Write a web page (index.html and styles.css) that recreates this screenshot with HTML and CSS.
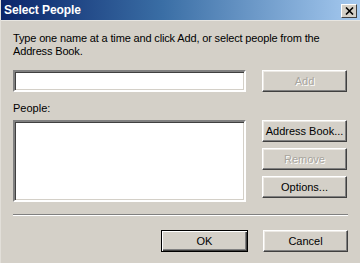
FILE: index.html
```html
<!DOCTYPE html>
<html>
<head>
<meta charset="utf-8">
<link rel="stylesheet" href="styles.css">
</head>
<body>
<div class="window">
  <div class="titlebar">
    <span class="title">Select People</span>
    <span class="close">
      <svg width="9" height="8" viewBox="0 0 9 8"><path d="M1 0.5 L8 7.5 M8 0.5 L1 7.5" stroke="#000" stroke-width="1.6"/></svg>
    </span>
  </div>
  <div class="content">
    <p class="intro">Type one name at a time and click Add, or select people from the Address Book.</p>
    <div class="row-add">
      <div class="field"></div>
      <button class="btn disabled">Add</button>
    </div>
    <div class="label">People:</div>
    <div class="row-people">
      <div class="listbox"></div>
      <div class="side">
        <button class="btn">Address Book...</button>
        <button class="btn disabled">Remove</button>
        <button class="btn">Options...</button>
      </div>
    </div>
    <div class="separator"></div>
    <div class="footer">
      <button class="btn default">OK</button>
      <button class="btn">Cancel</button>
    </div>
  </div>
</div>
</body>
</html>
```
FILE: styles.css
```css
html, body {
  margin: 0;
  padding: 0;
  width: 360px;
  height: 263px;
  overflow: hidden;
  background: #d4d0c8;
}
.window {
  width: 360px;
  height: 263px;
  background: #d4d0c8;
  font-family: "Liberation Sans", Arial, sans-serif;
  font-size: 11px;
  color: #000;
  box-sizing: border-box;
  border-left: 1px solid #e2dfd9;
}
.titlebar {
  height: 20px;
  background: linear-gradient(to right, #0a246a 0%, #3a6ea5 45%, #a6caf0 100%);
  display: flex;
  align-items: center;
  justify-content: space-between;
  padding: 0 3px 0 3px;
  border-bottom: 1px solid #e8e6e1;
}
.title {
  color: #fff;
  font-weight: bold;
  font-size: 12px;
  letter-spacing: -0.1px;
}
.close {
  width: 14px;
  height: 12px;
  background: #d4d0c8;
  border: 1px solid;
  border-color: #fff #404040 #404040 #fff;
  display: flex;
  align-items: center;
  justify-content: center;
  margin-top: 1px;
}
.content {
  padding: 0 12px 0 12px;
}
.intro {
  margin: 11px 0 0 0;
  line-height: 13px;
  width: 320px;
  letter-spacing: -0.15px;
}
.row-add {
  display: grid;
  grid-template-columns: 233px 85px;
  column-gap: 16px;
  margin-top: 12px;
  height: 22px;
}
.field, .listbox {
  background: #fff;
  box-sizing: border-box;
  border: 2px solid;
  border-color: #808080 #ffffff #ffffff #808080;
  box-shadow: inset 1px 1px 0 #404040, inset -1px -1px 0 #d4d0c8;
}
.field {
  height: 22px;
}
.label {
  margin-top: 10px;
  height: 13px;
  line-height: 13px;
}
.row-people {
  display: grid;
  grid-template-columns: 233px 85px;
  column-gap: 16px;
  margin-top: 5px;
}
.listbox {
  height: 82px;
}
.side {
  display: flex;
  flex-direction: column;
  gap: 6px;
}
.btn {
  font-family: "Liberation Sans", Arial, sans-serif;
  font-size: 11px;
  height: 22px;
  width: 85px;
  padding: 0;
  margin: 0;
  background: #d4d0c8;
  color: #000;
  box-sizing: border-box;
  border: 1px solid;
  border-color: #ffffff #404040 #404040 #ffffff;
  box-shadow: inset -1px -1px 0 #808080, inset 1px 1px 0 #ece9e4;
}
.btn.disabled {
  color: #a8a59e;
  text-shadow: 1px 1px 0 #fff;
}
.btn.default {
  border: 1px solid #000;
  box-shadow: inset 1px 1px 0 #fff, inset -1px -1px 0 #404040, inset -2px -2px 0 #808080;
  width: 87px;
}
.separator {
  margin-top: 12px;
  height: 1px;
  background: #808080;
  border-bottom: 1px solid #fff;
  width: 335px;
}
.footer {
  display: flex;
  justify-content: flex-end;
  gap: 15px;
  margin-top: 14px;
  width: 335px;
}
```
